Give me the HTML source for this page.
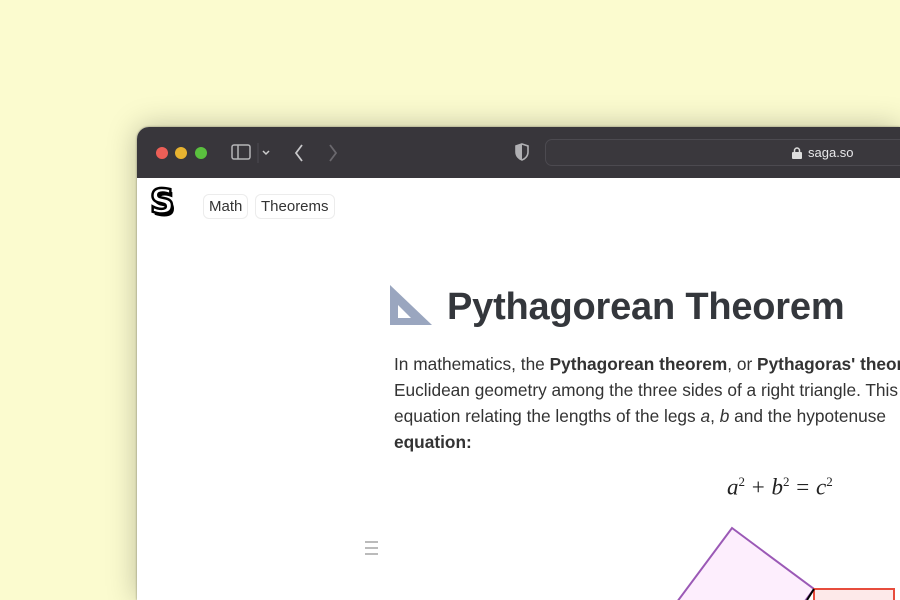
<!DOCTYPE html>
<html><head><meta charset="utf-8"><style>
*{margin:0;padding:0;box-sizing:border-box}
html,body{width:900px;height:600px;overflow:hidden;background:#fbfbcf;font-family:"Liberation Sans",sans-serif;position:relative}
.win{position:absolute;left:137px;top:127px;width:763px;height:473px;border-radius:12px 0 0 0;overflow:hidden;background:#fff;box-shadow:0 0 30px rgba(0,0,0,.25),0 0 2px rgba(0,0,0,.4)}
.bar{position:absolute;left:0;top:0;width:800px;height:51px;background:#38363b}
.dot{position:absolute;top:20px;width:12px;height:12px;border-radius:50%}
.url{position:absolute;left:408px;top:12px;width:400px;height:27px;border:1px solid #4c4a50;border-radius:7px;background:#3a383d}
.url span{position:absolute;left:262px;top:5px;color:#e8e8ea;font-size:13px}
.tag{position:absolute;top:67px;height:25px;border:1px solid #ececec;border-radius:6px;font-size:15px;color:#333;padding:3px 5px 0}
.t{position:absolute;left:310px;top:159px;font-size:38px;font-weight:bold;color:#34373c;letter-spacing:-.2px}
.p{position:absolute;left:257px;top:224px;width:600px;font-size:17.3px;line-height:26px;color:#333;white-space:nowrap}
.m{position:absolute;left:590px;top:347px;font-family:"Liberation Serif",serif;font-size:23px;color:#222;word-spacing:1px}
.m sup{font-size:13px}
</style></head><body>
<div class="win">
<div class="bar">
<div class="dot" style="left:19px;background:#ec5f57"></div>
<div class="dot" style="left:38px;background:#e7b330"></div>
<div class="dot" style="left:58px;background:#5ac03e"></div>
<svg style="position:absolute;left:94px;top:16px" width="40" height="20"><rect x="1" y="2" width="18" height="14" rx="2" fill="none" stroke="#b5b5b8" stroke-width="1.5"/><line x1="7" y1="2" x2="7" y2="16" stroke="#b5b5b8" stroke-width="1.5"/><line x1="27" y1="0" x2="27" y2="20" stroke="#4c4a50"/><path d="M32 8 l3 3 3-3" fill="none" stroke="#ccc" stroke-width="1.5"/></svg>
<svg style="position:absolute;left:155px;top:16px" width="50" height="20"><path d="M10 2 l-6 8 6 8" fill="none" stroke="#c8c8ca" stroke-width="1.8"/><path d="M38 2 l6 8 -6 8" fill="none" stroke="#6a686d" stroke-width="1.8"/></svg>
<svg style="position:absolute;left:377px;top:16px" width="16" height="18"><path d="M8 1 L14 3 V9 C14 13 11 16 8 17 C5 16 2 13 2 9 V3Z" fill="none" stroke="#b0b0b3" stroke-width="1.6"/><path d="M8 1 V17 C5 16 2 13 2 9 V3Z" fill="#b0b0b3"/></svg>
<div class="url"><svg style="position:absolute;left:246px;top:7px" width="10" height="12"><rect x="0" y="5" width="10" height="7" rx="1" fill="#ddd"/><path d="M2.5 5 V3.5 a2.5 2.5 0 0 1 5 0 V5" fill="none" stroke="#ddd" stroke-width="1.5"/></svg><span>saga.so</span></div>
</div>
<div style="position:absolute;left:13px;top:58px;font-size:34px;font-weight:bold;color:#fff;-webkit-text-stroke:2.5px #000;text-shadow:2px 3px 0 #000;font-family:'DejaVu Sans',sans-serif;line-height:34px">S</div>
<div class="tag" style="left:66px">Math</div>
<div class="tag" style="left:118px">Theorems</div>
<svg style="position:absolute;left:252px;top:157px" width="44" height="42"><path d="M1 1 L43 41 H1Z" fill="#9aa6bf"/><path d="M9 21 L22 34 H9Z" fill="#fff"/></svg>
<div class="t">Pythagorean Theorem</div>
<div class="p">In mathematics, the <b>Pythagorean theorem</b>, or <b>Pythagoras' theorem</b><br>Euclidean geometry among the three sides of a right triangle. This<br>equation relating the lengths of the legs <i>a</i>, <i>b</i> and the hypotenuse<br><b>equation:</b></div>
<div class="m"><i>a</i><sup>2</sup> + <i>b</i><sup>2</sup> = <i>c</i><sup>2</sup></div>
<svg style="position:absolute;left:228px;top:413px" width="14" height="16"><g stroke="#bbb" stroke-width="2"><line x1="0" y1="2" x2="13" y2="2"/><line x1="0" y1="8" x2="13" y2="8"/><line x1="0" y1="14" x2="13" y2="14"/></g></svg>
<svg style="position:absolute;left:0;top:0" width="763" height="473"><path d="M595 401 L677 462 L616 544 L534 483Z" fill="#fdeefd" stroke="#9b59b6" stroke-width="2"/><rect x="677" y="462" width="80" height="60" fill="#fde9e9" stroke="#e74c3c" stroke-width="2"/><path d="M670 473 L677 462" stroke="#000" stroke-width="2"/></svg>
</div>
</body></html>
